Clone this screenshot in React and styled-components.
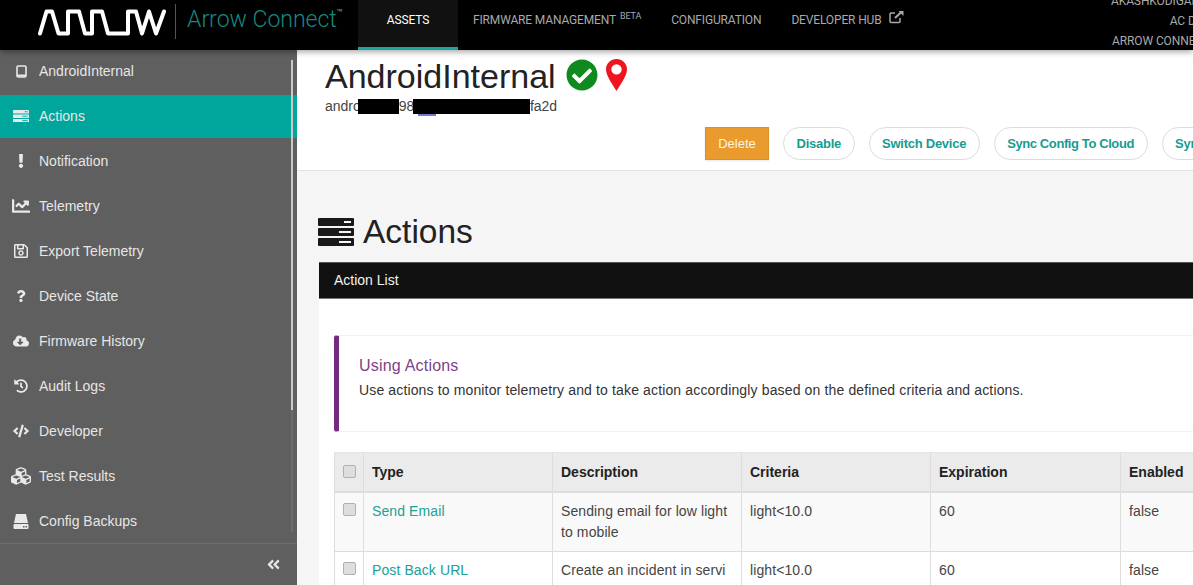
import React from "react";
import styled, { createGlobalStyle } from "styled-components";
import {
  FaExclamation,
  FaChartLine,
  FaRegSave,
  FaQuestion,
  FaCloudDownloadAlt,
  FaHistory,
  FaCode,
  FaCubes,
  FaAngleDoubleLeft,
  FaCheckCircle,
} from "react-icons/fa";

const GlobalStyle = createGlobalStyle`
  html, body {
    margin: 0;
    height: 100%;
    overflow: hidden;
    background: #f5f5f5;
    font-family: "Liberation Sans", Arial, sans-serif;
  }
  * { box-sizing: border-box; }
`;

const Page = styled.div`
  width: 1193px;
  height: 585px;
  overflow: hidden;
  display: flex;
  flex-direction: column;
`;

// top bar
const Header = styled.header`
  flex: 0 0 50px;
  display: flex;
  background: #000;
  position: relative;
  z-index: 2;
  box-shadow: 0 2px 6px rgba(0, 0, 0, 0.35);
  overflow: hidden;
`;

const Brand = styled.div`
  flex: 0 0 358px;
  display: flex;
  align-items: flex-start;
  padding: 4px 0 0 38px;
`;

const BrandDivider = styled.span`
  width: 1px;
  height: 35px;
  background: #555;
  margin: 0 11px 0 9px;
`;

const BrandName = styled.span`
  font-family: Roboto, "Liberation Sans", sans-serif;
  font-weight: 300;
  font-size: 23px;
  line-height: 32px;
  color: #15897f;
  white-space: nowrap;
  sup {
    font-size: 10px;
    color: #bbb;
    vertical-align: 11px;
    line-height: 0;
  }
`;

const Tab = styled.a`
  flex: 0 0 auto;
  min-width: ${(p) => (p.$active ? "100px" : "0")};
  padding: 13px 15px 0;
  font-family: Roboto, "Liberation Sans", sans-serif;
  font-size: 12px;
  line-height: 15px;
  letter-spacing: -0.15px;
  text-align: center;
  white-space: nowrap;
  color: ${(p) => (p.$active ? "#fff" : "#a9a9a9")};
  background: ${(p) => (p.$active ? "#111" : "transparent")};
  border-bottom: 3px solid ${(p) => (p.$active ? "#19a79d" : "transparent")};
  sup {
    font-size: 9px;
    line-height: 0;
    vertical-align: 5px;
    margin-left: 4px;
  }
  svg {
    margin: -3px 0 0 7px;
    vertical-align: top;
  }
`;

const UserBlock = styled.div`
  margin: -9px -17px 0 auto;
  font-family: Roboto, "Liberation Sans", sans-serif;
  font-size: 12px;
  line-height: 20px;
  letter-spacing: -0.1px;
  color: #a9a9a9;
  text-align: right;
  white-space: nowrap;
`;

const Body = styled.div`
  flex: 1;
  display: flex;
  min-height: 0;
`;

// left menu
const Sidebar = styled.aside`
  flex: 0 0 297px;
  background: #5f5f5f;
  display: flex;
  flex-direction: column;
  position: relative;
`;

const MenuList = styled.nav`
  flex: 0 0 493px;
  display: flex;
  flex-direction: column;
  gap: 2px;
  border-bottom: 1px solid #6f6f6f;
`;

const MenuItem = styled.a`
  flex: 0 0 43px;
  display: flex;
  align-items: center;
  padding-bottom: 1px;
  color: #e6e6e6;
  font-size: 14px;
  background: ${(p) => (p.$active ? "#00a69c" : "transparent")};
`;

const MenuIcon = styled.span`
  flex: 0 0 39px;
  display: flex;
  justify-content: center;
  padding-left: 3px;
  color: #e9e9e9;
  font-size: ${(p) => p.$size || 14}px;
`;

const ScrollTrack = styled.div`
  position: absolute;
  left: 291px;
  top: 10px;
  width: 2px;
  height: 472px;
  background: #6c6c6c;
`;

const ScrollThumb = styled.div`
  width: 2px;
  height: 350px;
  background: #c9c9c9;
`;

const CollapseRow = styled.div`
  flex: 1;
  display: flex;
  justify-content: flex-end;
  align-items: center;
  padding: 0 16px 0 0;
  color: #e6e6e6;
  font-size: 15px;
`;

// right side
const Main = styled.main`
  flex: 1;
  min-width: 0;
  overflow: hidden;
  display: flex;
  flex-direction: column;
  background: #f5f5f5;
`;

const DeviceBar = styled.section`
  flex: 0 0 121px;
  background: #fff;
  border-bottom: 1px solid #e3e3e3;
  padding: 7px 0 0 28px;
`;

const TitleRow = styled.div`
  display: flex;
  align-items: center;
  gap: 10px;
  height: 38px;
`;

const Title = styled.h1`
  margin: 0;
  font-size: 34px;
  font-weight: 400;
  line-height: 38px;
  color: #222;
`;

const Status = styled.span`
  display: flex;
  align-items: center;
  gap: 8px;
  margin-top: -2px;
`;

const DeviceId = styled.div`
  margin-top: 2px;
  height: 18px;
  display: flex;
  align-items: center;
  font-size: 14px;
  color: #444;
`;

const Redacted = styled.span`
  position: relative;
  display: inline-block;
  width: ${(p) => p.$w}px;
  height: 15px;
  margin-left: ${(p) => p.$overlap || 0}px;
  background: #000;
  &::after {
    content: "${(p) => (p.$mark ? " " : "")}";
    position: absolute;
    left: 5px;
    bottom: -2px;
    width: 18px;
    height: 2px;
    background: ${(p) => (p.$mark ? "#7a78c8" : "transparent")};
  }
`;

const Actions = styled.div`
  display: flex;
  gap: 14px;
  margin: 12px 0 0 380px;
`;

const DangerButton = styled.button`
  flex: 0 0 auto;
  width: 64px;
  height: 33px;
  padding: 0;
  border: 1px solid #dd9028;
  background: #e99b2d;
  color: #fff3e2;
  font: 400 13px "Liberation Sans", sans-serif;
  box-shadow: 0 1px 2px rgba(0, 0, 0, 0.1);
`;

const PillButton = styled.button`
  flex: 0 0 auto;
  height: 33px;
  padding: 0 12.5px;
  border: 1px solid #dcdcdc;
  border-radius: 17px;
  background: #fff;
  color: #169c92;
  font: 700 13px "Liberation Sans", sans-serif;
  letter-spacing: ${(p) => (p.$tight ? "-0.4px" : "-0.25px")};
  white-space: nowrap;
`;

const Content = styled.section`
  padding: 42px 0 0 21px;
`;

const SectionHead = styled.div`
  display: flex;
  align-items: center;
  gap: 9px;
  height: 38px;
  margin-bottom: 11px;
`;

const SectionTitle = styled.h2`
  margin: 0;
  font-size: 33.5px;
  font-weight: 400;
  color: #222;
`;

const Panel = styled.div`
  width: 1100px;
  margin-left: 1px;
  background: #fff;
`;

const PanelHead = styled.div`
  height: 37px;
  background: #111;
  border-top: 1px solid #555;
  border-bottom: 1px solid #777;
  padding: 0 0 2px 15px;
  display: flex;
  align-items: center;
  color: #f2f2f2;
  font-size: 14px;
`;

const PanelBody = styled.div`
  padding: 36px 15px 0;
`;

const Callout = styled.div`
  height: 97px;
  padding: 20px 0 0 20px;
  border: 1px solid #f1f1f1;
  border-left: 5px solid #742a80;
  border-radius: 3px;
  margin-bottom: 20px;
`;

const CalloutTitle = styled.h4`
  margin: 0 0 4px;
  font-size: 16px;
  font-weight: 400;
  line-height: 20px;
  color: #7c4388;
  letter-spacing: 0.2px;
`;

const CalloutText = styled.p`
  margin: 0;
  font-size: 14px;
  line-height: 20px;
  color: #333;
  letter-spacing: 0.14px;
`;

const Table = styled.table`
  width: 1000px;
  table-layout: fixed;
  border-collapse: collapse;
  font-size: 14px;
  line-height: 21px;
  color: #444;
`;

const Th = styled.th`
  height: 39px;
  padding: 2px 8px 0;
  background: #ebebeb;
  border: 1px solid #ddd;
  border-top-color: #e6e6e6;
  border-bottom: 2px solid #ddd;
  text-align: left;
  color: #222;
  font-weight: 700;
`;

const Td = styled.td`
  padding: 8px 8px 8px;
  border: 1px solid #ddd;
  vertical-align: top;
  background: ${(p) => (p.$odd ? "#f9f9f9" : "#fff")};
  letter-spacing: 0.1px;
`;

const TypeLink = styled.a`
  color: #21a096;
`;

const Check = styled.input.attrs({ type: "checkbox" })`
  appearance: none;
  display: block;
  margin: ${(p) => p.$top || 0}px 0 0 0;
  width: 13px;
  height: 13px;
  background: #dedede;
  border: 1px solid #b0b0b0;
  border-radius: 2px;
`;

const ActionsIcon = ({ w, color, bar }) => (
  <svg width={w} viewBox="0 0 36 28" style={{ display: "block" }}>
    <rect x="0" y="0" width="36" height="8" rx="1" fill={color} />
    <rect x="0" y="10" width="36" height="8" rx="1" fill={color} />
    <rect x="0" y="20" width="36" height="8" rx="1" fill={color} />
    <rect x="26" y="3" width="7" height="2" fill={bar} />
    <rect x="21" y="13" width="12" height="2" fill={bar} />
    <rect x="21" y="23" width="12" height="2" fill={bar} />
  </svg>
);

const ArrowLogo = () => (
  <svg width="128" height="28" viewBox="0 0 128 28" style={{ flex: "none", marginTop: 5 }}>
    <polyline
      points="2,24.5 8.5,2.5 14,2.5 20.5,24.5 30,24.5 30,2.5 41,2.5 47,24.5 54,24.5 54,2.5 64,2.5 70,24.5 90,24.5 90,2.5 98,2.5 104,24.5 111,2.5 118,24.5 126,2.5"
      fill="none"
      stroke="#fff"
      strokeWidth="4"
      strokeLinejoin="round"
      strokeLinecap="round"
    />
  </svg>
);

const ExternalIcon = () => (
  <svg width="15" height="14" viewBox="0 0 15 14" fill="none" stroke="#a9a9a9" strokeWidth="1.5">
    <path d="M11 8v3.5a1 1 0 0 1-1 1H2a1 1 0 0 1-1-1V4a1 1 0 0 1 1-1h4" />
    <path d="M6 8l7-6.5" strokeWidth="2" />
    <path d="M9.5 1h5v5" fill="#a9a9a9" stroke="none" />
  </svg>
);

const DeviceIcon = () => (
  <svg width="11" height="13" viewBox="0 0 11 13" fill="none" stroke="#e9e9e9" strokeWidth="1.6">
    <rect x="1" y="1" width="9" height="11" rx="1.2" />
    <path d="M1 10.5h9" strokeWidth="2" />
  </svg>
);

const BackupIcon = () => (
  <svg width="16" height="15" viewBox="0 0 16 15" fill="#e9e9e9">
    <path d="M3 0h10l2 9H1z" />
    <rect x="0.5" y="10" width="15" height="5" rx="1" />
    <rect x="10" y="12" width="1.5" height="1.5" fill="#5f5f5f" />
    <rect x="12.5" y="12" width="1.5" height="1.5" fill="#5f5f5f" />
  </svg>
);

const PinIcon = () => (
  <svg width="21" height="32" viewBox="0 0 21 32">
    <path
      fillRule="evenodd"
      fill="#f0141e"
      d="M10.5 0C4.7 0 0 4.6 0 10.4c0 6.4 7 15.6 10.5 21.6C14 26 21 16.8 21 10.4 21 4.6 16.3 0 10.5 0zm0 5.2a5.2 5.2 0 1 1 0 10.4 5.2 5.2 0 0 1 0-10.4z"
    />
  </svg>
);

const menu = [
  { label: "AndroidInternal", icon: <DeviceIcon /> },
  { label: "Actions", icon: <ActionsIcon w={16} color="#e9e9e9" bar="#00a69c" />, active: true },
  { label: "Notification", icon: <FaExclamation /> },
  { label: "Telemetry", icon: <FaChartLine />, size: 18 },
  { label: "Export Telemetry", icon: <FaRegSave />, size: 16 },
  { label: "Device State", icon: <FaQuestion />, size: 12 },
  { label: "Firmware History", icon: <FaCloudDownloadAlt />, size: 16 },
  { label: "Audit Logs", icon: <FaHistory /> },
  { label: "Developer", icon: <FaCode />, size: 16 },
  { label: "Test Results", icon: <FaCubes />, size: 20 },
  { label: "Config Backups", icon: <BackupIcon /> },
];

const rows = [
  { type: "Send Email", desc: "Sending email for low light to mobile" },
  { type: "Post Back URL", desc: "Create an incident in servi" },
];

export default function App() {
  return (
    <Page>
      <GlobalStyle />
      <Header>
        <Brand>
          <ArrowLogo />
          <BrandDivider />
          <BrandName>
            Arrow Connect<sup>™</sup>
          </BrandName>
        </Brand>
        <Tab $active>ASSETS</Tab>
        <Tab>
          FIRMWARE MANAGEMENT<sup>BETA</sup>
        </Tab>
        <Tab>CONFIGURATION</Tab>
        <Tab>
          DEVELOPER HUB
          <ExternalIcon />
        </Tab>
        <UserBlock>
          <div>AKASHKODIGANTI</div>
          <div>AC DEV</div>
          <div>ARROW CONNECT</div>
        </UserBlock>
      </Header>
      <Body>
        <Sidebar>
          <MenuList>
            {menu.map((item) => (
              <MenuItem key={item.label} $active={item.active}>
                <MenuIcon $size={item.size}>{item.icon}</MenuIcon>
                {item.label}
              </MenuItem>
            ))}
          </MenuList>
          <ScrollTrack>
            <ScrollThumb />
          </ScrollTrack>
          <CollapseRow>
            <FaAngleDoubleLeft />
          </CollapseRow>
        </Sidebar>
        <Main>
          <DeviceBar>
            <TitleRow>
              <Title>AndroidInternal</Title>
              <Status>
                <FaCheckCircle size={32} color="#0f8a1f" />
                <PinIcon />
              </Status>
            </TitleRow>
            <DeviceId>
              andro
              <Redacted $w={41} $overlap={-3} />
              98
              <Redacted $w={117} $overlap={-1.5} $mark />
              fa2d
            </DeviceId>
            <Actions>
              <DangerButton>Delete</DangerButton>
              <PillButton>Disable</PillButton>
              <PillButton>Switch Device</PillButton>
              <PillButton $tight>Sync Config To Cloud</PillButton>
              <PillButton>Sync Config From Cloud</PillButton>
            </Actions>
          </DeviceBar>
          <Content>
            <SectionHead>
              <ActionsIcon w={36} color="#1a1a1a" bar="#f5f5f5" />
              <SectionTitle>Actions</SectionTitle>
            </SectionHead>
            <Panel>
              <PanelHead>Action List</PanelHead>
              <PanelBody>
                <Callout>
                  <CalloutTitle>Using Actions</CalloutTitle>
                  <CalloutText>
                    Use actions to monitor telemetry and to take action accordingly based on the
                    defined criteria and actions.
                  </CalloutText>
                </Callout>
                <Table>
                  <colgroup>
                    <col width="29" />
                    <col width="189" />
                    <col width="189" />
                    <col width="189" />
                    <col width="190" />
                    <col width="214" />
                  </colgroup>
                  <thead>
                    <tr>
                      <Th>
                        <Check $top={-2} />
                      </Th>
                      <Th>Type</Th>
                      <Th>Description</Th>
                      <Th>Criteria</Th>
                      <Th>Expiration</Th>
                      <Th>Enabled</Th>
                    </tr>
                  </thead>
                  <tbody>
                    {rows.map((row, i) => (
                      <tr key={row.type}>
                        <Td $odd={i === 0}>
                          <Check $top={2} />
                        </Td>
                        <Td $odd={i === 0}>
                          <TypeLink>{row.type}</TypeLink>
                        </Td>
                        <Td $odd={i === 0}>{row.desc}</Td>
                        <Td $odd={i === 0}>light&lt;10.0</Td>
                        <Td $odd={i === 0}>60</Td>
                        <Td $odd={i === 0}>false</Td>
                      </tr>
                    ))}
                  </tbody>
                </Table>
              </PanelBody>
            </Panel>
          </Content>
        </Main>
      </Body>
    </Page>
  );
}
